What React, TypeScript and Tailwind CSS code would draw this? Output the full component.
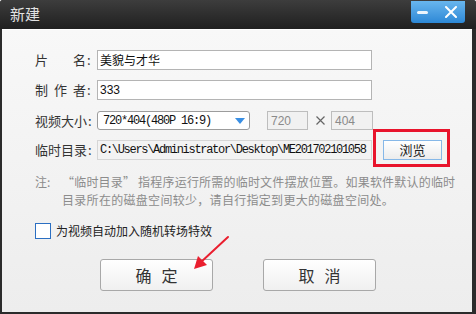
import React from "react";

const cjk = { fontFamily: '"Noto Sans CJK SC", "Noto Sans", sans-serif' };
const mono = { fontFamily: '"Liberation Mono", "Noto Sans CJK SC", monospace' };

function Label3({ a, b, c }: { a: string; b: string; c: string }) {
  return (
    <div className="flex w-[62px] shrink-0 items-center text-[13px] text-[#333]" style={cjk}>
      <span className="w-[19px]">{a}</span>
      <span className="w-[19px]">{b}</span>
      <span className="w-[13px]">{c}</span>
      <span className="ml-[1px]">:</span>
    </div>
  );
}

function Label4({ text }: { text: string }) {
  return (
    <div className="flex w-[62px] shrink-0 items-center text-[13px] text-[#333]" style={cjk}>
      <span>{text}</span>
      <span className="ml-[1px]">:</span>
    </div>
  );
}

export default function App() {
  const path = "C:\\Users\\Administrator\\Desktop\\ME201702101058";
  return (
    <div className="relative flex h-[314px] w-[476px] flex-col overflow-hidden rounded-t-[3px] bg-[#2b2b2b]">
      {/* title bar */}
      <div className="flex h-[29px] shrink-0 items-start bg-gradient-to-b from-[#3d3d3d] to-[#202020]">
        <div className="ml-[10px] mt-[5px] text-[15px] leading-[18px] text-[#e2e2e2]" style={cjk}>
          新建
        </div>
        <div className="flex-1" />
        <div className="mr-[11px] mt-[1px] flex h-[22px] w-[54px] items-center rounded-b-[3px] bg-gradient-to-b from-[#68b6ee] to-[#2c88d6]">
          <div className="ml-[6px] h-[3px] w-[11px] rounded-full bg-white/90" />
          <svg className="ml-[17px]" width="12" height="12" viewBox="0 0 12 12">
            <path d="M1 1 L11 11 M11 1 L1 11" stroke="white" strokeWidth="2" strokeLinecap="round" />
          </svg>
        </div>
      </div>

      {/* body */}
      <div className="mb-[2px] ml-[2px] mr-[4px] flex flex-1 flex-col border-t border-white bg-gradient-to-b from-[#f8f8f8] to-[#ededed] pl-[33px]">
        {/* row 1 */}
        <div className="mt-[20px] flex h-[20px] items-center">
          <Label3 a="片" b="" c="名" />
          <div
            className="flex h-[20px] w-[275px] items-center border border-[#b4b4b4] bg-white pl-[2px] text-[12px] text-[#111]"
            style={cjk}
          >
            美貌与才华
          </div>
        </div>
        {/* row 2 */}
        <div className="mt-[10px] flex h-[20px] items-center">
          <Label3 a="制" b="作" c="者" />
          <div
            className="flex h-[20px] w-[275px] items-center border border-[#b4b4b4] bg-white pl-[2px] text-[12px] text-[#111]"
            style={{ fontFamily: '"Liberation Sans", sans-serif' }}
          >
            333
          </div>
        </div>
        {/* row 3 */}
        <div className="mt-[11px] flex h-[19px] items-center">
          <Label4 text="视频大小" />
          <div className="flex h-[19px] w-[153px] items-center rounded-[3px] border border-[#9c9c9c] bg-white pl-[5px] pr-[4px]">
            <span className="flex-1 text-[12px] tracking-[-1.2px] text-[#111]" style={mono}>
              720*404(480P 16:9)
            </span>
            <svg width="10" height="6" viewBox="0 0 10 6">
              <path d="M0 0 L10 0 L5 6 Z" fill="#3a8fe4" />
            </svg>
          </div>
          <div
            className="ml-[17px] flex h-[19px] w-[41px] items-center border border-[#bdbdbd] bg-[#f1f1f1] pl-[3px] text-[12px] text-[#8a8a8a]"
            style={{ fontFamily: '"Liberation Sans", sans-serif' }}
          >
            720
          </div>
          <svg className="ml-[8px]" width="9" height="9" viewBox="0 0 9 9">
            <path d="M0.5 0.5 L8.5 8.5 M8.5 0.5 L0.5 8.5" stroke="#666" strokeWidth="1.2" />
          </svg>
          <div
            className="ml-[6px] flex h-[19px] w-[42px] items-center border border-[#bdbdbd] bg-[#f1f1f1] pl-[3px] text-[12px] text-[#8a8a8a]"
            style={{ fontFamily: '"Liberation Sans", sans-serif' }}
          >
            404
          </div>
        </div>
        {/* row 4 */}
        <div className="mt-[10px] flex h-[20px] items-start">
          <div className="flex h-[20px] items-center">
            <Label4 text="临时目录" />
          </div>
          <div className="flex h-[20px] w-[275px] items-center overflow-hidden whitespace-nowrap border border-[#d6d6d6] bg-[#f3f3f3] pl-[2px]">
            <span className="text-[12px] tracking-[-1.3px] text-[#111]" style={mono}>
              {path}
            </span>
          </div>
          <div className="-mt-[11px] ml-[1px] h-[38px] w-[77px] border-[3px] border-[#e8142c] pl-[7px] pt-[8px]">
            <div
              className="flex h-[20px] w-[59px] items-center justify-center border border-[#86b8e8] bg-gradient-to-b from-white to-[#ececec] text-[13px] text-[#222]"
              style={cjk}
            >
              浏览
            </div>
          </div>
        </div>
        {/* note */}
        <div className="mt-[13px] flex text-[12px] leading-[18px] text-[#8c8c8c]" style={cjk}>
          <span className="w-[27px] shrink-0">注:</span>
          <div className="flex flex-col whitespace-nowrap">
            <span className="tracking-[0.2px]">“临时目录” 指程序运行所需的临时文件摆放位置。如果软件默认的临时</span>
            <span className="tracking-[0.3px]">目录所在的磁盘空间较少，请自行指定到更大的磁盘空间处。</span>
          </div>
        </div>
        {/* checkbox */}
        <div className="mt-[14px] flex h-[16px] items-center">
          <div className="h-[16px] w-[16px] border-[1.5px] border-[#2b6fc2] bg-white" />
          <span className="ml-[5px] text-[12px] text-[#222]" style={cjk}>
            为视频自动加入随机转场特效
          </span>
        </div>
        {/* buttons */}
        <div className="mt-[20px] flex pl-[65px]">
          <div
            className="flex h-[32px] w-[113px] items-center justify-center gap-[10px] rounded-[3px] border border-[#a8a8a8] bg-gradient-to-b from-white to-[#f0f0f0] text-[16px] font-normal text-[#333]"
            style={cjk}
          >
            <span>确</span>
            <span>定</span>
          </div>
          <div
            className="ml-[50px] flex h-[32px] w-[113px] items-center justify-center gap-[10px] rounded-[3px] border border-[#a8a8a8] bg-gradient-to-b from-white to-[#f0f0f0] text-[16px] font-normal text-[#333]"
            style={cjk}
          >
            <span>取</span>
            <span>消</span>
          </div>
        </div>
      </div>

      {/* annotation arrow */}
      <svg className="absolute left-0 top-0" width="476" height="314" viewBox="0 0 476 314" pointerEvents="none">
        <path d="M228 237 L200 263" stroke="#ea1f2f" strokeWidth="2" strokeLinecap="round" />
        <path d="M194 269 L198 256 L207 265 Z" fill="#ea1f2f" />
      </svg>
    </div>
  );
}
